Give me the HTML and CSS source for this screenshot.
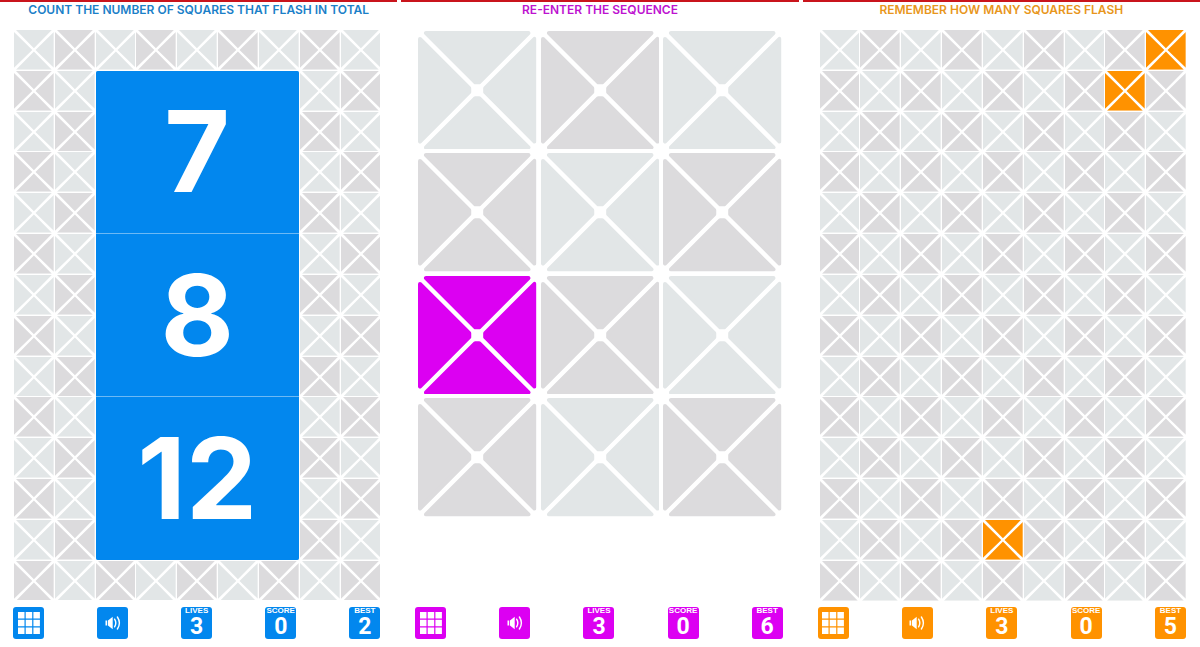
FILE: index.html
```
<!DOCTYPE html>
<html lang="en">
<head>
<meta charset="utf-8">
<meta name="viewport" content="width=device-width, initial-scale=1">
<title>Memory squares</title>
<link rel="stylesheet" href="styles.css">
</head>
<body>
<svg class="sprite" aria-hidden="true">
  <symbol id="tile-small" viewBox="0 0 40 40">
    <path d="M2 0H38L20 18.400ZM40 2V38L21.600 20ZM38 40H2L20 21.600ZM0 38V2L18.400 20Z"/>
  </symbol>
  <symbol id="tile-large" viewBox="0 0 119 119">
    <path stroke-width="4" stroke-linejoin="round" d="M8 2H111L61.500 51.500H57.500ZM117 8V111L67.500 61.500V57.500ZM111 117H8L57.500 67.500H61.500ZM2 111V8L51.500 57.500V61.500Z"/>
  </symbol>
  <symbol id="icon-grid" viewBox="0 0 22 22">
    <path d="M0 0h6.500v6.500H0zM7.700 0h6.500v6.500H7.700zM15.400 0h6.500v6.500h-6.500zM0 7.700h6.500v6.500H0zM7.700 7.700h6.500v6.500H7.700zM15.400 7.700h6.500v6.500h-6.500zM0 15.400h6.500v6.500H0zM7.700 15.400h6.500v6.500H7.700zM15.400 15.400h6.500v6.500h-6.500z"/>
  </symbol>
  <symbol id="icon-sound" viewBox="0 0 16 16">
    <path d="M.5 5.500H2.200V10.500H.5zM3 5.500L7.700 1.800V14.200L3 10.500z"/>
    <path fill="none" stroke="currentColor" stroke-width="1.400" stroke-linecap="round" d="M9.600 4.200Q12 8 9.600 11.800M12.400 2Q16.400 8 12.400 14"/>
  </symbol>
</svg>

<main class="screens">
  <section class="panel panel-blue">
    <h1 class="title">COUNT THE NUMBER OF SQUARES THAT FLASH IN TOTAL</h1>
    <div class="board board-small" data-columns="9" data-rows="14" data-lit="">
      <div class="answers">
        <button class="answer" type="button">7</button>
        <button class="answer" type="button">8</button>
        <button class="answer" type="button">12</button>
      </div>
    </div>
    <footer class="toolbar">
      <button class="chip" type="button" aria-label="Menu"><svg class="icon-grid"><use href="#icon-grid"/></svg></button>
      <button class="chip" type="button" aria-label="Sound"><svg class="icon-sound"><use href="#icon-sound"/></svg></button>
      <div class="chip stat"><span class="label">LIVES</span><span class="value">3</span></div>
      <div class="chip stat"><span class="label">SCORE</span><span class="value">0</span></div>
      <div class="chip stat"><span class="label">BEST</span><span class="value">2</span></div>
    </footer>
  </section>

  <section class="panel panel-magenta">
    <h1 class="title">RE-ENTER THE SEQUENCE</h1>
    <div class="board board-large" data-columns="3" data-rows="4" data-lit="2-0"></div>
    <footer class="toolbar">
      <button class="chip" type="button" aria-label="Menu"><svg class="icon-grid"><use href="#icon-grid"/></svg></button>
      <button class="chip" type="button" aria-label="Sound"><svg class="icon-sound"><use href="#icon-sound"/></svg></button>
      <div class="chip stat"><span class="label">LIVES</span><span class="value">3</span></div>
      <div class="chip stat"><span class="label">SCORE</span><span class="value">0</span></div>
      <div class="chip stat"><span class="label">BEST</span><span class="value">6</span></div>
    </footer>
  </section>

  <section class="panel panel-orange">
    <h1 class="title">REMEMBER HOW MANY SQUARES FLASH</h1>
    <div class="board board-small" data-columns="9" data-rows="14" data-lit="0-8 1-7 12-4"></div>
    <footer class="toolbar">
      <button class="chip" type="button" aria-label="Menu"><svg class="icon-grid"><use href="#icon-grid"/></svg></button>
      <button class="chip" type="button" aria-label="Sound"><svg class="icon-sound"><use href="#icon-sound"/></svg></button>
      <div class="chip stat"><span class="label">LIVES</span><span class="value">3</span></div>
      <div class="chip stat"><span class="label">SCORE</span><span class="value">0</span></div>
      <div class="chip stat"><span class="label">BEST</span><span class="value">5</span></div>
    </footer>
  </section>
</main>
<script src="board.js"></script>
</body>
</html>
```
FILE: styles.css
```
* { box-sizing: border-box; }

body {
  margin: 0;
  background: #fff;
  font-family: Inter, "Liberation Sans", sans-serif;
}

.sprite {
  position: absolute;
  width: 0;
  height: 0;
}

.screens {
  display: grid;
  grid-template-columns: repeat(3, 1fr);
  gap: 4px;
}

.panel {
  display: flex;
  flex-direction: column;
  padding-bottom: 8px;
  border-top: 2px solid #c9141c;
  color: var(--accent);
}

.panel-blue {
  --accent: #0287ee;
  --title: #1b80c8;
  --board-inset: 0 17px 0 14px;
  --toolbar-inset: 6px 17px 0 13px;
}

.panel-magenta {
  --accent: #dc00f2;
  --title: #bd12d0;
  --board-inset: 1px 17px 0;
  --toolbar-inset: 6px 16px 0 14px;
}

.panel-orange {
  --accent: #ff9200;
  --title: #e8961c;
  --board-inset: 0 14px 0 17px;
  --toolbar-inset: 6px 14px 0 15px;
}

.title {
  margin: 0;
  height: 28px;
  color: var(--title);
  font-size: 12px;
  font-weight: 600;
  line-height: 16px;
  text-align: center;
  white-space: nowrap;
}

.board {
  display: grid;
  margin: var(--board-inset);
}

.board-small {
  grid-template-columns: repeat(9, 1fr);
  gap: 1px;
}

.board-large {
  grid-template-columns: repeat(3, 1fr);
  gap: 4px;
}

.tile {
  aspect-ratio: 1;
  min-width: 0;
  padding: 0;
  border: 0;
  background: none;
  color: #e2e6e7;
}

.tile svg {
  display: block;
  width: 100%;
  height: 100%;
  fill: currentColor;
  stroke: currentColor;
  stroke-width: 0;
}

.tile.dark { color: #dcdbdd; }
.tile.lit { color: var(--accent); }

.answers {
  display: grid;
  grid-area: 2 / 3 / 14 / 8;
  grid-template-rows: repeat(3, 1fr);
  gap: 1px;
  border-radius: 2px;
  background: #6db9f4;
  overflow: hidden;
}

.answer {
  min-height: 0;
  padding: 0;
  border: 0;
  background: var(--accent);
  color: #fff;
  font: 700 113px/1 Inter, "Liberation Sans", sans-serif;
}

.toolbar {
  display: flex;
  justify-content: space-between;
  margin-top: auto;
  padding: var(--toolbar-inset);
}

.chip {
  display: flex;
  align-items: center;
  justify-content: center;
  width: 31px;
  height: 32px;
  padding: 0;
  border: 0;
  border-radius: 3px;
  background: var(--accent);
  color: #fff;
}

.chip svg { fill: currentColor; }

.icon-grid {
  width: 22px;
  height: 22px;
}

.icon-sound {
  width: 16px;
  height: 16px;
}

.stat {
  flex-direction: column;
  justify-content: flex-start;
}

.label {
  font: 700 8px/8px "Liberation Sans", sans-serif;
}

.value {
  font: 700 23px/24px Roboto, "Liberation Sans", sans-serif;
}
```
FILE: board.js
```
// Fills each board with alternating tiles; data-lit lists "row-column" pairs.
document.querySelectorAll(".board").forEach((board) => {
  const columns = Number(board.dataset.columns);
  const rows = Number(board.dataset.rows);
  const lit = board.dataset.lit.split(" ");
  const covered = board.querySelector(".answers");
  const symbol = board.classList.contains("board-large") ? "tile-large" : "tile-small";

  for (let row = 0; row < rows; row++) {
    for (let column = 0; column < columns; column++) {
      if (covered && row > 0 && row < 13 && column > 1 && column < 7) continue;
      const tile = document.createElement("button");
      tile.type = "button";
      tile.className = "tile";
      tile.setAttribute("aria-label", `Row ${row + 1}, column ${column + 1}`);
      if ((row + column) % 2) tile.classList.add("dark");
      if (lit.includes(`${row}-${column}`)) tile.classList.add("lit");
      tile.innerHTML = `<svg aria-hidden="true"><use href="#${symbol}"/></svg>`;
      board.append(tile);
    }
  }
});
```
